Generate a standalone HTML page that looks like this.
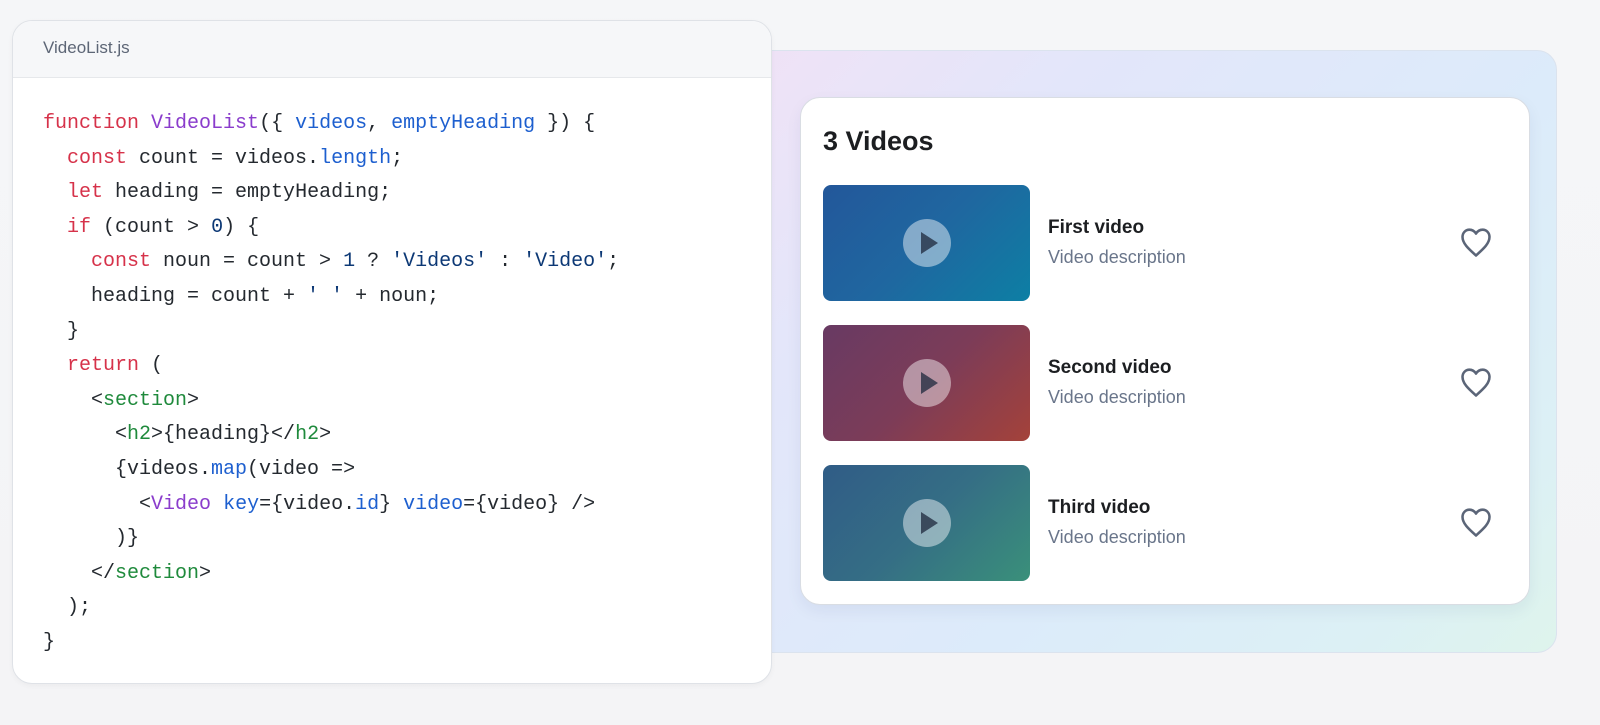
<!DOCTYPE html>
<html><head><meta charset="utf-8"><style>
*{box-sizing:border-box;margin:0;padding:0}
body{width:1600px;height:725px;overflow:hidden;background:linear-gradient(180deg,#f5f6f8,#f4f4f6);font-family:"Liberation Sans",sans-serif;position:relative}
.right{position:absolute;left:740px;top:50px;width:817px;height:603px;border-radius:20px;border:1px solid #dbe3ee;background:linear-gradient(135deg,#f0e2f6 0%,#e3e6fa 25%,#dcebfa 60%,#dcf0f5 85%,#def4ec 100%)}
.code{position:absolute;left:12px;top:20px;width:760px;height:664px;border-radius:20px;border:1px solid #dfe2e7;background:#fff;overflow:hidden;box-shadow:0 2px 6px rgba(0,0,0,.04)}
.hdr{height:57px;background:#f6f7f9;border-bottom:1px solid #e6e8eb;padding:17px 0 0 30px;color:#5d6676;font-size:17px}
pre{position:absolute;left:30px;top:86px;font-family:"Liberation Mono",monospace;font-size:20px;line-height:34.6px;color:#24292f;letter-spacing:0}
.k{color:#d6324a}.f{color:#8a3ccc}.p{color:#1d5fcf}.s{color:#0c3875}.t{color:#1f8a3c}
.card{position:absolute;left:800px;top:97px;width:730px;height:508px;background:#fff;border-radius:20px;border:1px solid #d9dde3;box-shadow:0 6px 16px rgba(0,40,80,.06)}
h2{position:absolute;left:22px;top:28px;font-size:27px;font-weight:bold;color:#1c1e21}
.row{position:absolute;left:22px;width:690px;height:116px}
.th{position:absolute;left:0;top:0;width:207px;height:116px;border-radius:8px}
.pl{position:absolute;left:80px;top:34px;width:48px;height:48px;border-radius:50%;background:rgba(255,255,255,.45)}
.pl:after{content:"";position:absolute;left:18px;top:13px;border-left:17px solid rgba(30,40,60,.75);border-top:11px solid transparent;border-bottom:11px solid transparent}
.ti{position:absolute;left:225px;top:32px;font-size:19px;font-weight:bold;color:#1c1e21}
.de{position:absolute;left:225px;top:62px;font-size:18px;color:#69758a}
.hr{position:absolute;left:634px;top:39px}
</style></head><body>
<div class="right"></div>
<div class="code"><div class="hdr">VideoList.js</div>
<pre><span class="k">function</span> <span class="f">VideoList</span>({ <span class="p">videos</span>, <span class="p">emptyHeading</span> }) {
  <span class="k">const</span> count = videos.<span class="p">length</span>;
  <span class="k">let</span> heading = emptyHeading;
  <span class="k">if</span> (count &gt; <span class="s">0</span>) {
    <span class="k">const</span> noun = count &gt; <span class="s">1</span> ? <span class="s">'Videos'</span> : <span class="s">'Video'</span>;
    heading = count + <span class="s">' '</span> + noun;
  }
  <span class="k">return</span> (
    &lt;<span class="t">section</span>&gt;
      &lt;<span class="t">h2</span>&gt;{heading}&lt;/<span class="t">h2</span>&gt;
      {videos.<span class="p">map</span>(video =&gt;
        &lt;<span class="f">Video</span> <span class="p">key</span>={video.<span class="p">id</span>} <span class="p">video</span>={video} /&gt;
      )}
    &lt;/<span class="t">section</span>&gt;
  );
}</pre></div>
<div class="card"><h2>3 Videos</h2>
<div class="row" style="top:87px"><div class="th" style="background:linear-gradient(135deg,#23579a 0%,#1f67a0 50%,#0d7fa4 100%)"><div class="pl"></div></div><div class="ti">First video</div><div class="de">Video description</div><svg class="hr" width="38" height="36" viewBox="0 0 24 24" fill="none" stroke="#5b6578" stroke-width="1.7" stroke-linejoin="round"><path d="M12 21C7 16.5 3 13 3 8.6 3 5.8 5.1 3.8 7.6 3.8c1.8 0 3.4 1 4.4 2.6 1-1.6 2.6-2.6 4.4-2.6 2.5 0 4.6 2 4.6 4.8C21 13 17 16.5 12 21z"/></svg></div>
<div class="row" style="top:227px"><div class="th" style="background:linear-gradient(135deg,#683a63 0%,#7c3c58 50%,#a4423a 100%)"><div class="pl"></div></div><div class="ti">Second video</div><div class="de">Video description</div><svg class="hr" width="38" height="36" viewBox="0 0 24 24" fill="none" stroke="#5b6578" stroke-width="1.7" stroke-linejoin="round"><path d="M12 21C7 16.5 3 13 3 8.6 3 5.8 5.1 3.8 7.6 3.8c1.8 0 3.4 1 4.4 2.6 1-1.6 2.6-2.6 4.4-2.6 2.5 0 4.6 2 4.6 4.8C21 13 17 16.5 12 21z"/></svg></div>
<div class="row" style="top:367px"><div class="th" style="background:linear-gradient(135deg,#305c86 0%,#356e85 50%,#3a907a 100%)"><div class="pl"></div></div><div class="ti">Third video</div><div class="de">Video description</div><svg class="hr" width="38" height="36" viewBox="0 0 24 24" fill="none" stroke="#5b6578" stroke-width="1.7" stroke-linejoin="round"><path d="M12 21C7 16.5 3 13 3 8.6 3 5.8 5.1 3.8 7.6 3.8c1.8 0 3.4 1 4.4 2.6 1-1.6 2.6-2.6 4.4-2.6 2.5 0 4.6 2 4.6 4.8C21 13 17 16.5 12 21z"/></svg></div>
</div>
</body></html>
